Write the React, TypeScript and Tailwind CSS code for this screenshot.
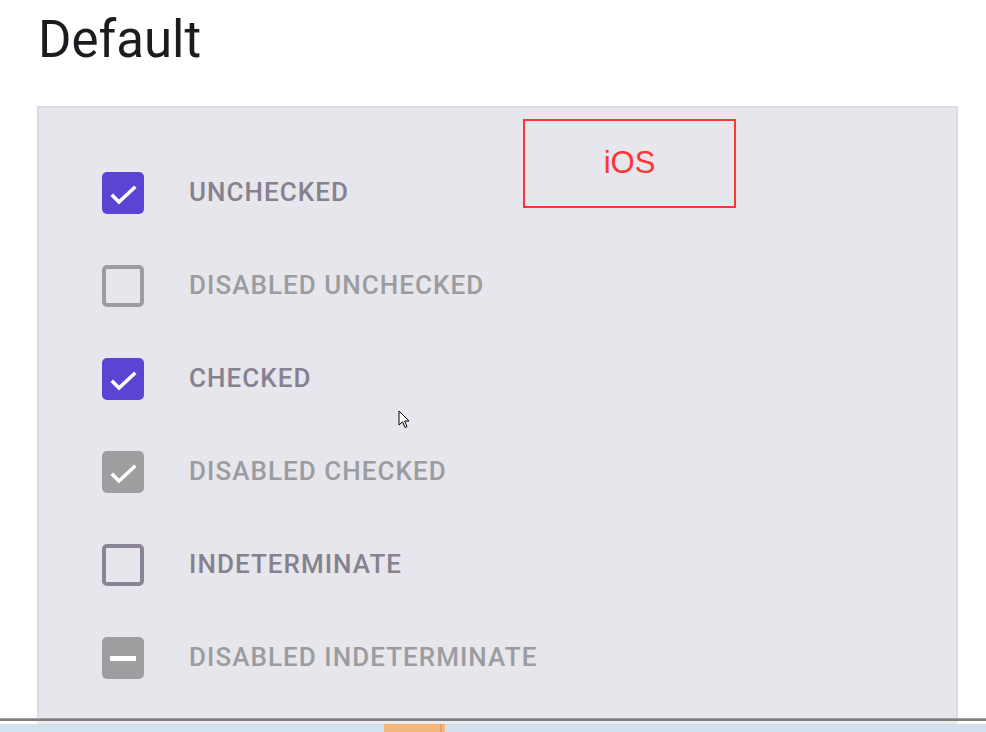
const rows = [
  { label: 'UNCHECKED', kind: 'checked', disabled: false },
  { label: 'DISABLED UNCHECKED', kind: 'empty', disabled: true },
  { label: 'CHECKED', kind: 'checked', disabled: false },
  { label: 'DISABLED CHECKED', kind: 'checked', disabled: true },
  { label: 'INDETERMINATE', kind: 'empty', disabled: false },
  { label: 'DISABLED INDETERMINATE', kind: 'dash', disabled: true },
];

const Box = ({ kind, disabled }: { kind: string; disabled: boolean }) => {
  if (kind === 'empty') {
    return (
      <div
        className={`w-[42px] h-[42px] rounded-[5px] border-[4px] ${
          disabled ? 'border-[#9d9d9f]' : 'border-[#8a8494]'
        }`}
      />
    );
  }
  return (
    <div
      className={`w-[42px] h-[42px] rounded-[5px] flex items-center justify-center ${
        disabled ? 'bg-[#9e9ea1]' : 'bg-[#5a44d3]'
      }`}
    >
      {kind === 'checked' ? (
        <svg width="42" height="42" viewBox="0 0 42 42">
          <polyline
            points="11,24 17,30 32,16"
            fill="none"
            stroke="#fff"
            strokeWidth="3.6"
            strokeLinecap="square"
          />
        </svg>
      ) : (
        <div className="w-[26px] h-[5px] bg-white" />
      )}
    </div>
  );
};

export default function App() {
  return (
    <div className="w-[986px] h-[732px] bg-white overflow-hidden" style={{ fontFamily: 'Roboto, "Noto Sans", sans-serif' }}>
      <div className="h-[718px] overflow-hidden">
        <h1 className="pl-[38px] pt-[10px] text-[51px] leading-[60px] text-[#1d1b20] font-normal">Default</h1>
        <div className="relative ml-[37px] mt-[36px] w-[921px] h-[700px] bg-[#e6e6ec] border-2 border-[#dcdce0] pt-[64px] pl-[63px]">
          <div className="flex flex-col gap-[51px]">
            {rows.map((r) => (
              <div key={r.label} className="flex items-center gap-[45px]">
                <Box kind={r.kind} disabled={r.disabled} />
                <span
                  className={`text-[26px] font-medium tracking-[0.04em] leading-none -mt-[2px] ${
                    r.disabled ? 'text-[#9c9ca0]' : 'text-[#86818f]'
                  }`}
                >
                  {r.label}
                </span>
              </div>
            ))}
          </div>
          <div
            className="absolute left-[484px] top-[11px] w-[213px] h-[89px] border-2 border-[#ff3535] flex items-center justify-center text-[31px] text-[#ff3535]"
            style={{ fontFamily: '"Liberation Sans", Arial, sans-serif' }}
          >
            iOS
          </div>
          <svg className="absolute left-[359px] top-[302px]" width="14" height="20" viewBox="0 0 14 20">
            <path d="M1 1 L1 15 L4.5 11.8 L7 17.5 L9 16.6 L6.6 11 L11 11 Z" fill="#fff" stroke="#000" strokeWidth="1" strokeLinejoin="miter" />
          </svg>
        </div>
      </div>
      <div className="h-[3px] bg-[#7f7f7f] border-t border-[#a0a0a0]" />
      <div className="h-[3px] flex bg-white">
        <div className="ml-[37px] w-[921px] bg-[#ececf0]" />
      </div>
      <div className="h-[8px] flex bg-[#d3e3ee]">
        <div className="ml-[384px] w-[56px] bg-[#f6b57b]" />
        <div className="w-[2px] bg-[#e8a06a]" />
        <div className="w-[3px] bg-[#f6b57b]" />
        <div className="flex-1 bg-[#d5e0ee]" />
      </div>
    </div>
  );
}
